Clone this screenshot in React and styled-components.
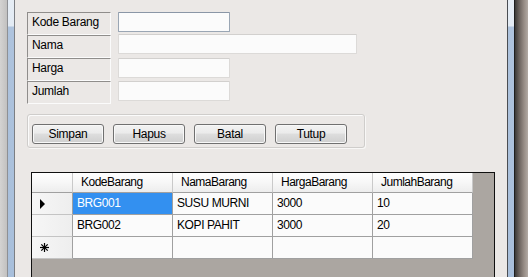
import React from 'react';
import styled, { createGlobalStyle } from 'styled-components';

const GlobalStyle = createGlobalStyle`
  html, body {
    margin: 0;
    padding: 0;
    overflow: hidden;
    background: #ebe8e6;
  }
`;

const Screen = styled.div`
  width: 528px;
  height: 277px;
  display: flex;
  overflow: hidden;
  font-family: 'Liberation Sans', Arial, sans-serif;
  font-size: 12px;
  color: #000;
`;

const OuterLeft = styled.div`
  width: 7px;
  flex: none;
  background: linear-gradient(to right, #d4d3d2, #c2c1c0);
`;

const Frame = styled.div`
  width: 6px;
  flex: none;
  border-left: 1px solid ${p => (p.$right ? '#4a4d52' : '#8e9094')};
  border-right: 1px solid ${p => (p.$right ? '#1e1e1e' : '#7b7e83')};
  background: linear-gradient(to bottom, #e6edf5 0, #e3ebf4 26px, #aec3dd 27px, #a8bfdb 100%);
`;

const Shadow = styled.div`
  flex: 1;
  background: linear-gradient(to right, #3c3a38, #6e6661 35%, #978d86 70%, #b2aaa4);
`;

const Client = styled.div`
  width: 492px;
  flex: none;
  background: #ebe8e6;
  padding: 12px 0 0 12px;
  box-sizing: border-box;
  display: flex;
  flex-direction: column;
`;

const Fields = styled.div`
  display: flex;
  flex-direction: column;
`;

const FieldRow = styled.div`
  display: flex;
  align-items: flex-start;
  gap: 7px;
  height: 23px;
`;

const LabelBox = styled.div`
  width: 84px;
  height: 23px;
  box-sizing: border-box;
  border-top: 1px solid #8f8d8b;
  border-left: 1px solid #8f8d8b;
  border-bottom: 1px solid #fbfbfb;
  border-right: 1px solid #fbfbfb;
  padding: 2px 4px 0;
  line-height: 14px;
  letter-spacing: -0.3px;
`;

const TextBox = styled.div`
  width: ${p => p.$w}px;
  height: 20px;
  box-sizing: border-box;
  margin-top: ${p => p.$dy || 0}px;
  background: #fbfbfb;
  border: 1px solid ${p => (p.$focus ? '#9aa6b4' : '#dcdad8')};
  border-top-color: ${p => (p.$focus ? '#8a96a6' : '#d2d0ce')};
  border-radius: 1px;
`;

const GroupBox = styled.div`
  margin-top: 10px;
  width: 338px;
  height: 34px;
  box-sizing: border-box;
  border: 1px solid #cfcdcb;
  border-radius: 3px;
  box-shadow: inset 1px 1px 0 #fbfbfb, 1px 1px 0 #f8f7f6;
  padding: 9px 0 0 4px;
  display: flex;
  gap: 9px;
`;

const Button = styled.div`
  width: 72px;
  height: 20px;
  box-sizing: border-box;
  border: 1px solid #707070;
  border-radius: 3px;
  background: linear-gradient(to bottom, #f2f2f2 0%, #ebebeb 45%, #dddddd 50%, #cfcfcf 100%);
  box-shadow: inset 0 0 0 1px #f8f8f8;
  display: flex;
  align-items: center;
  justify-content: center;
  letter-spacing: -0.3px;
`;

const Grid = styled.div`
  margin: 24px 0 0 4px;
  width: 464px;
  flex: 1;
  box-sizing: border-box;
  border: 1px solid #101010;
  border-bottom: none;
  background: #aba6a1;
`;

const Table = styled.div`
  display: grid;
  grid-template-columns: 41px repeat(4, 100px);
  grid-auto-rows: 22px;
  grid-template-rows: 20px;
  width: max-content;
`;

const HeadCell = styled.div`
  box-sizing: border-box;
  border-right: 1px solid #c9c9c9;
  border-bottom: 1px solid #a0a0a0;
  background: linear-gradient(to bottom, #ffffff 0%, #f7f7f7 50%, #ededed 100%);
  padding-left: 8px;
  line-height: 19px;
  letter-spacing: -0.5px;
  white-space: nowrap;
`;

const RowHead = styled.div`
  box-sizing: border-box;
  border-right: 1px solid #a0a0a0;
  border-bottom: 1px solid #c4c4c4;
  background: linear-gradient(to right, #f6f6f6, #eeeeee);
  display: flex;
  align-items: center;
  padding-left: 8px;
`;

const Cell = styled.div`
  box-sizing: border-box;
  border-right: 1px solid #a0a0a0;
  border-bottom: 1px solid #a0a0a0;
  background: ${p => (p.$selected ? '#3390f0' : '#fbfbfb')};
  color: ${p => (p.$selected ? '#ffffff' : '#000000')};
  padding-left: 4px;
  line-height: 21px;
  letter-spacing: -0.4px;
  white-space: nowrap;
`;

const Pointer = styled.span`
  width: 0;
  height: 0;
  border-top: 5px solid transparent;
  border-bottom: 5px solid transparent;
  border-left: 5px solid #000;
`;

const columns = ['KodeBarang', 'NamaBarang', 'HargaBarang', 'JumlahBarang'];
const rows = [
  ['BRG001', 'SUSU MURNI', '3000', '10'],
  ['BRG002', 'KOPI PAHIT', '3000', '20'],
];

function Asterisk() {
  return (
    <svg width="9" height="9" viewBox="0 0 9 9">
      <g stroke="#000" strokeWidth="1.2">
        <line x1="4.5" y1="0" x2="4.5" y2="9" />
        <line x1="0" y1="4.5" x2="9" y2="4.5" />
        <line x1="1.3" y1="1.3" x2="7.7" y2="7.7" />
        <line x1="7.7" y1="1.3" x2="1.3" y2="7.7" />
      </g>
    </svg>
  );
}

export default function App() {
  return (
    <>
      <GlobalStyle />
      <Screen>
        <OuterLeft />
        <Frame />
        <Client>
          <Fields>
            <FieldRow>
              <LabelBox>Kode Barang</LabelBox>
              <TextBox $w={112} $focus />
            </FieldRow>
            <FieldRow>
              <LabelBox>Nama</LabelBox>
              <TextBox $w={239} $dy={-1} />
            </FieldRow>
            <FieldRow>
              <LabelBox>Harga</LabelBox>
              <TextBox $w={112} />
            </FieldRow>
            <FieldRow>
              <LabelBox>Jumlah</LabelBox>
              <TextBox $w={112} />
            </FieldRow>
          </Fields>

          <GroupBox>
            <Button>Simpan</Button>
            <Button>Hapus</Button>
            <Button>Batal</Button>
            <Button>Tutup</Button>
          </GroupBox>

          <Grid>
            <Table>
              <HeadCell />
              {columns.map(c => (
                <HeadCell key={c}>{c}</HeadCell>
              ))}
              {rows.map((r, i) => (
                <React.Fragment key={r[0]}>
                  <RowHead>{i === 0 && <Pointer />}</RowHead>
                  {r.map((v, j) => (
                    <Cell key={j} $selected={i === 0 && j === 0}>{v}</Cell>
                  ))}
                </React.Fragment>
              ))}
              <RowHead><Asterisk /></RowHead>
              {columns.map(c => (
                <Cell key={c} />
              ))}
            </Table>
          </Grid>
        </Client>
        <Frame $right />
        <Shadow />
      </Screen>
    </>
  );
}
